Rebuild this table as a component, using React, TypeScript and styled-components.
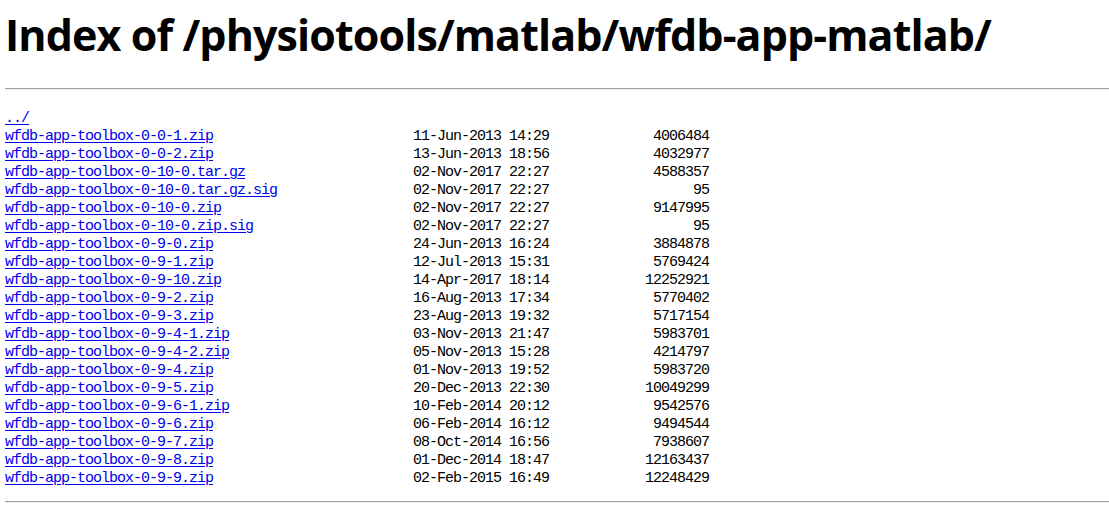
import { Fragment } from 'react'
import styled, { createGlobalStyle } from 'styled-components'

const GlobalStyle = createGlobalStyle`
  html, body {
    margin: 0;
    padding: 0;
    background: #fff;
    color: #000;
  }
`

const Page = styled.div`
  padding: 0 0 0 5px;
`

const Title = styled.h1`
  margin: 0;
  padding-top: 7px;
  height: 88px;
  box-sizing: border-box;
  font-family: "Open Sans", "Noto Sans", Arial, sans-serif;
  font-weight: 700;
  font-size: 43px;
  line-height: 56px;
  letter-spacing: -0.9px;
  white-space: nowrap;
`

const Rule = styled.hr`
  margin: 0;
  height: 0;
  border: 0;
  border-top: 1px solid #a0a0a0;
  border-bottom: 1px solid #eeeeee;
`

const Listing = styled.div`
  display: grid;
  grid-template-columns: 408px 136px 160px;
  grid-auto-rows: 18px;
  padding: 20px 0 13px;
  font-family: "Liberation Mono", "Courier New", monospace;
  font-size: 15px;
  line-height: 18px;
  letter-spacing: -1px;
  white-space: pre;
`

const NameLink = styled.a`
  color: #0000ee;
  text-decoration: underline;
  text-underline-offset: 2px;
`

const DateCell = styled.span``

const SizeCell = styled.span`
  text-align: right;
`

type Entry = { name: string; date: string; size: string }

const entries: Entry[] = [
  { name: 'wfdb-app-toolbox-0-0-1.zip', date: '11-Jun-2013 14:29', size: '4006484' },
  { name: 'wfdb-app-toolbox-0-0-2.zip', date: '13-Jun-2013 18:56', size: '4032977' },
  { name: 'wfdb-app-toolbox-0-10-0.tar.gz', date: '02-Nov-2017 22:27', size: '4588357' },
  { name: 'wfdb-app-toolbox-0-10-0.tar.gz.sig', date: '02-Nov-2017 22:27', size: '95' },
  { name: 'wfdb-app-toolbox-0-10-0.zip', date: '02-Nov-2017 22:27', size: '9147995' },
  { name: 'wfdb-app-toolbox-0-10-0.zip.sig', date: '02-Nov-2017 22:27', size: '95' },
  { name: 'wfdb-app-toolbox-0-9-0.zip', date: '24-Jun-2013 16:24', size: '3884878' },
  { name: 'wfdb-app-toolbox-0-9-1.zip', date: '12-Jul-2013 15:31', size: '5769424' },
  { name: 'wfdb-app-toolbox-0-9-10.zip', date: '14-Apr-2017 18:14', size: '12252921' },
  { name: 'wfdb-app-toolbox-0-9-2.zip', date: '16-Aug-2013 17:34', size: '5770402' },
  { name: 'wfdb-app-toolbox-0-9-3.zip', date: '23-Aug-2013 19:32', size: '5717154' },
  { name: 'wfdb-app-toolbox-0-9-4-1.zip', date: '03-Nov-2013 21:47', size: '5983701' },
  { name: 'wfdb-app-toolbox-0-9-4-2.zip', date: '05-Nov-2013 15:28', size: '4214797' },
  { name: 'wfdb-app-toolbox-0-9-4.zip', date: '01-Nov-2013 19:52', size: '5983720' },
  { name: 'wfdb-app-toolbox-0-9-5.zip', date: '20-Dec-2013 22:30', size: '10049299' },
  { name: 'wfdb-app-toolbox-0-9-6-1.zip', date: '10-Feb-2014 20:12', size: '9542576' },
  { name: 'wfdb-app-toolbox-0-9-6.zip', date: '06-Feb-2014 16:12', size: '9494544' },
  { name: 'wfdb-app-toolbox-0-9-7.zip', date: '08-Oct-2014 16:56', size: '7938607' },
  { name: 'wfdb-app-toolbox-0-9-8.zip', date: '01-Dec-2014 18:47', size: '12163437' },
  { name: 'wfdb-app-toolbox-0-9-9.zip', date: '02-Feb-2015 16:49', size: '12248429' },
]

export default function App() {
  return (
    <Page>
      <GlobalStyle />
      <Title>Index of /physiotools/matlab/wfdb-app-matlab/</Title>
      <Rule />
      <Listing>
        <span>
          <NameLink href="../">../</NameLink>
        </span>
        <DateCell />
        <SizeCell />
        {entries.map(e => (
          <Fragment key={e.name}>
            <span>
              <NameLink href={e.name}>{e.name}</NameLink>
            </span>
            <DateCell>{e.date}</DateCell>
            <SizeCell>{e.size}</SizeCell>
          </Fragment>
        ))}
      </Listing>
      <Rule />
    </Page>
  )
}
